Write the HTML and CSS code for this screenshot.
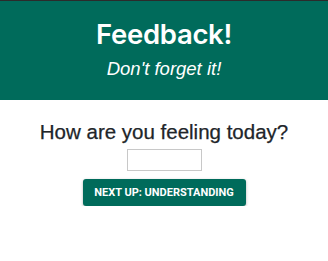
FILE: index.html
```html
<!DOCTYPE html>
<html>
<head>
<meta charset="utf-8">
<link rel="stylesheet" href="styles.css">
</head>
<body>
<div class="topbar"></div>
<header class="hero">
  <h1 class="hero-title">Feedback!</h1>
  <p class="hero-sub">Don't forget it!</p>
</header>
<main class="content">
  <h2 class="question">How are you feeling today?</h2>
  <input class="answer" type="text">
  <button class="next-btn">Next up: Understanding</button>
</main>
</body>
</html>
```
FILE: styles.css
```css
* { box-sizing: border-box; }
html, body { margin: 0; padding: 0; background: #fff; }
body { font-family: "Liberation Sans", Arial, sans-serif; }
.topbar { height: 1px; background: #2b2b2b; }
.hero {
  background: #006b5b;
  color: #fff;
  text-align: center;
  height: 99px;
  padding-top: 16px;
}
.hero-title {
  margin: 0;
  font-family: Inter, "Liberation Sans", sans-serif;
  font-size: 27.5px;
  font-weight: 600;
  letter-spacing: -0.3px;
  line-height: 34px;
}
.hero-sub {
  margin: 7px 0 0;
  font-size: 18.5px;
  font-style: italic;
  line-height: 22px;
}
.content {
  display: flex;
  flex-direction: column;
  align-items: center;
  padding-top: 19px;
}
.question {
  margin: 0;
  font-size: 20.5px;
  font-weight: 400;
  color: #212529;
  line-height: 26px;
  -webkit-text-stroke: 0.25px #212529;
}
.answer {
  margin-top: 4px;
  width: 75px;
  height: 22px;
  border: 1px solid #c8c8c8;
  padding: 0 4px;
  font: inherit;
}
.next-btn {
  margin-top: 8px;
  width: 163px;
  height: 27px;
  background: #006b5b;
  color: #fff;
  border: none;
  border-radius: 3px;
  font-family: Roboto, "Liberation Sans", sans-serif;
  font-weight: 700;
  font-size: 11px;
  text-transform: uppercase;
  letter-spacing: 0;
  box-shadow: 0 1px 3px rgba(0,0,0,0.3);
}
```
